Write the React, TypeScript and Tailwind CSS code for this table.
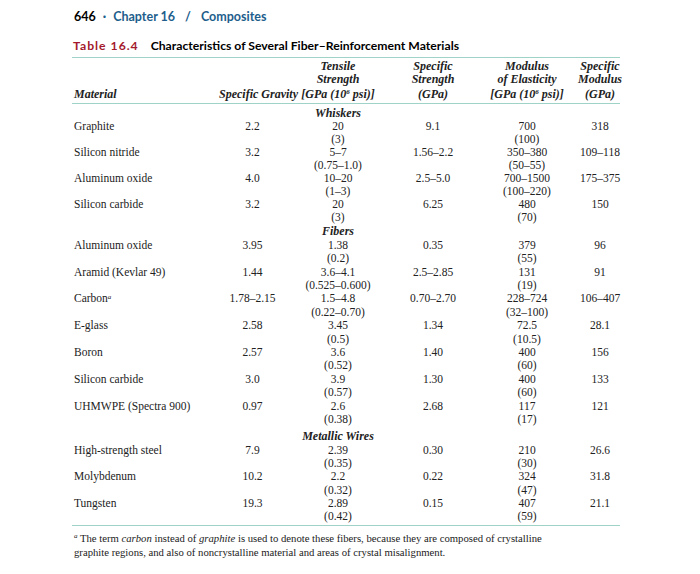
type Row = [string, string, string, string, string, string, string, string];

const WHISKERS: Row[] = [
  ["Graphite", "2.2", "20", "(3)", "9.1", "700", "(100)", "318"],
  ["Silicon nitride", "3.2", "5–7", "(0.75–1.0)", "1.56–2.2", "350–380", "(50–55)", "109–118"],
  ["Aluminum oxide", "4.0", "10–20", "(1–3)", "2.5–5.0", "700–1500", "(100–220)", "175–375"],
  ["Silicon carbide", "3.2", "20", "(3)", "6.25", "480", "(70)", "150"],
];

const FIBERS: Row[] = [
  ["Aluminum oxide", "3.95", "1.38", "(0.2)", "0.35", "379", "(55)", "96"],
  ["Aramid (Kevlar 49)", "1.44", "3.6–4.1", "(0.525–0.600)", "2.5–2.85", "131", "(19)", "91"],
  ["Carbon", "1.78–2.15", "1.5–4.8", "(0.22–0.70)", "0.70–2.70", "228–724", "(32–100)", "106–407"],
  ["E-glass", "2.58", "3.45", "(0.5)", "1.34", "72.5", "(10.5)", "28.1"],
  ["Boron", "2.57", "3.6", "(0.52)", "1.40", "400", "(60)", "156"],
  ["Silicon carbide", "3.0", "3.9", "(0.57)", "1.30", "400", "(60)", "133"],
  ["UHMWPE (Spectra 900)", "0.97", "2.6", "(0.38)", "2.68", "117", "(17)", "121"],
];

const WIRES: Row[] = [
  ["High-strength steel", "7.9", "2.39", "(0.35)", "0.30", "210", "(30)", "26.6"],
  ["Molybdenum", "10.2", "2.2", "(0.32)", "0.22", "324", "(47)", "31.8"],
  ["Tungsten", "19.3", "2.89", "(0.42)", "0.15", "407", "(59)", "21.1"],
];

const GRID = "grid grid-cols-[133px_95px_76px_114px_74px_72px]";
const CELL = "flex justify-center whitespace-nowrap";

function Section({ title, rows, lh }: { title: string; rows: Row[]; lh: string }) {
  return (
    <div className={lh}>
      <div className={GRID}>
        <div className="col-start-3 flex justify-center whitespace-nowrap text-[12px] font-bold italic">{title}</div>
      </div>
      {rows.map((r) => (
        <div key={r[0] + r[1]} className={GRID}>
          <div className="pl-[2px] whitespace-nowrap">
            {r[0]}
            {r[0] === "Carbon" && <sup className="text-[7px] italic">a</sup>}
          </div>
          <div className={CELL}>{r[1]}</div>
          <div className="flex flex-col items-center whitespace-nowrap">
            <span>{r[2]}</span>
            <span>{r[3]}</span>
          </div>
          <div className={CELL}>{r[4]}</div>
          <div className="flex flex-col items-center whitespace-nowrap">
            <span>{r[5]}</span>
            <span>{r[6]}</span>
          </div>
          <div className={CELL}>{r[7]}</div>
        </div>
      ))}
    </div>
  );
}

function Psi() {
  return (
    <span>
      [GPa (10<sup className="text-[7px]">6</sup> psi)]
    </span>
  );
}

export default function App() {
  return (
    <div className="w-[700px] h-[574px] overflow-hidden bg-white pl-[72px] pt-[9px] text-[#222]">
      {/* page header */}
      <div className="pl-[2px] font-['Lato',sans-serif] text-[12.5px] font-bold leading-[16px]">
        <span className="text-black">646</span>
        <span className="text-[#1d5e8c]">
          <span className="mx-[7px]">·</span>Chapter 16<span className="mx-[10px]">/</span>Composites
        </span>
      </div>

      {/* table title */}
      <div className="mt-[14px] pl-[1px] font-['Lato',sans-serif] text-[12.2px] font-bold leading-[14px] text-black">
        <span className="mr-[12px] tracking-[1px] text-[#a3192d]">Table 16.4</span>
        Characteristics of Several Fiber–Reinforcement Materials
      </div>
      <div className="mt-[4px] h-px w-[548px] bg-[#9fd3c7]" />

      <div className="font-['Liberation_Serif',serif] text-[11.5px]">
        {/* column headings */}
        <div className={GRID + " pt-[1.5px] text-[12px] font-bold italic leading-[13px]"}>
          <div className="flex flex-col justify-end pl-[2px]">Material</div>
          <div className="flex flex-col justify-end items-center pl-[12px] whitespace-nowrap">Specific Gravity</div>
          <div className="flex flex-col items-center whitespace-nowrap">
            <span>Tensile</span>
            <span>Strength</span>
            <span className="mt-[2px]"><Psi /></span>
          </div>
          <div className="flex flex-col items-center whitespace-nowrap">
            <span>Specific</span>
            <span>Strength</span>
            <span className="mt-[2px]">(GPa)</span>
          </div>
          <div className="flex flex-col items-center whitespace-nowrap">
            <span>Modulus</span>
            <span>of Elasticity</span>
            <span className="mt-[2px]"><Psi /></span>
          </div>
          <div className="flex flex-col items-center whitespace-nowrap">
            <span>Specific</span>
            <span>Modulus</span>
            <span className="mt-[2px]">(GPa)</span>
          </div>
        </div>
        <div className="mt-[2.5px] h-px w-[548px] bg-[#9fd3c7]" />

        <div className="pt-[2.5px]">
          <Section title="Whiskers" rows={WHISKERS} lh="leading-[13px]" />
          <div className="pt-[1.8px]">
            <Section title="Fibers" rows={FIBERS} lh="leading-[13.4px]" />
          </div>
          <div className="pt-[4px]">
            <Section title="Metallic Wires" rows={WIRES} lh="leading-[13.3px]" />
          </div>
        </div>
        <div className="mt-[1.5px] h-px w-[548px] bg-[#9fd3c7]" />

        {/* footnote */}
        <div className="pt-[5px] pl-[2px] text-[10.7px] leading-[14px]">
          <div className="whitespace-nowrap">
            <sup className="text-[7px] italic">a</sup> The term <i>carbon</i> instead of <i>graphite</i> is used to
            denote these fibers, because they are composed of crystalline
          </div>
          <div className="whitespace-nowrap">
            graphite regions, and also of noncrystalline material and areas of crystal misalignment.
          </div>
        </div>
      </div>
    </div>
  );
}
